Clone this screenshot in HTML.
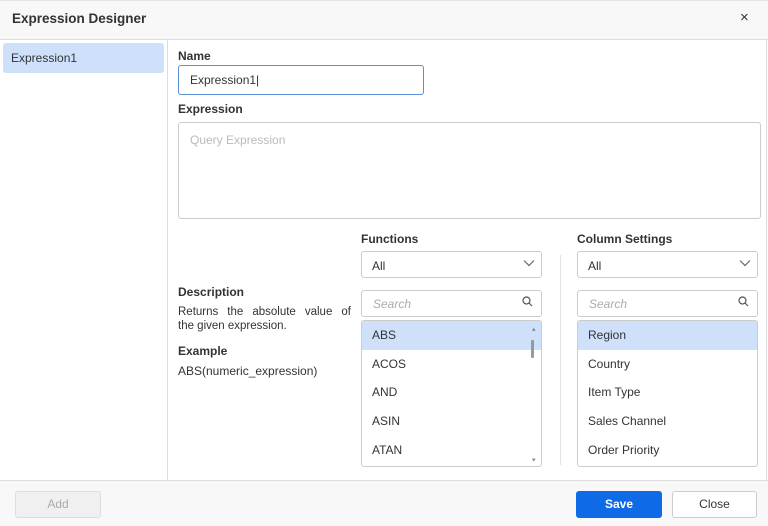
<!DOCTYPE html>
<html><head><style>
*{box-sizing:border-box;margin:0;padding:0}
body{width:768px;height:526px;overflow:hidden;background:#fff;font-family:"Liberation Sans",sans-serif;font-size:12px;color:#333;position:relative}
.a{position:absolute}
.lbl{font-weight:bold;font-size:12px;color:#333}
.box{border:1px solid #ccc;border-radius:3px;background:#fff}
.item{height:28.7px;line-height:28.7px;padding-left:10px;font-size:12px;color:#333}
.sel{background:#cfe0fb}
</style></head><body>
<div class="a" style="left:0;top:0;width:768px;height:40px;background:#f8f8f8;border-bottom:1px solid #ddd;border-top:1px solid #e5e5e5"></div>
<div class="a" style="left:12px;top:11px;font-size:13.5px;font-weight:bold;color:#333">Expression Designer</div>
<div class="a" style="left:740px;top:9px;font-size:15px;color:#333">×</div>
<div class="a" style="left:167px;top:40px;width:1px;height:440px;background:#ddd"></div>
<div class="a" style="left:766px;top:40px;width:1px;height:440px;background:#ddd"></div>
<div class="a" style="left:3px;top:43px;width:161px;height:30px;background:#cfe0fb;border-radius:3px;padding:8px 0 0 8px;color:#333">Expression1</div>
<div class="a lbl" style="left:178px;top:49px">Name</div>
<div class="a" style="left:178px;top:65px;width:246px;height:30px;border:1px solid #5b8fd6;border-radius:3px;padding:7px 11px;font-size:12px">Expression1|</div>
<div class="a lbl" style="left:178px;top:102px">Expression</div>
<div class="a box" style="left:178px;top:122px;width:583px;height:97px;padding:10px 11px;color:#bbb">Query Expression</div>
<div class="a lbl" style="left:361px;top:232px">Functions</div>
<div class="a lbl" style="left:577px;top:232px">Column Settings</div>
<div class="a lbl" style="left:178px;top:285px">Description</div>
<div class="a" style="left:178px;top:305px;width:173px;line-height:14px;font-size:11.5px"><div style="text-align:justify;text-align-last:justify">Returns the absolute value of</div><div>the given expression.</div></div>
<div class="a lbl" style="left:178px;top:344px">Example</div>
<div class="a" style="left:178px;top:364px">ABS(numeric_expression)</div>
<div class="a" style="left:560px;top:255px;width:1px;height:210px;background:#e2e2e2"></div>

<div class="a box" style="left:361px;top:251px;width:181px;height:27px;padding:7px 10px">All</div>
<svg class="a" style="left:523px;top:259px" width="12" height="8"><path d="M1 1.5L6 6.5L11 1.5" fill="none" stroke="#666" stroke-width="1.2"/></svg>
<div class="a box" style="left:361px;top:290px;width:181px;height:27px;padding:6px 11px;font-style:italic;color:#aaa">Search</div>
<svg class="a" style="left:522px;top:296px" width="11" height="11"><circle cx="4.5" cy="4.5" r="3.5" fill="none" stroke="#555" stroke-width="1.2"/><path d="M7 7L10 10" stroke="#555" stroke-width="1.2"/></svg>
<div class="a box" style="left:361px;top:320px;width:181px;height:147px;overflow:hidden">
<div class="item sel">ABS</div><div class="item">ACOS</div><div class="item">AND</div><div class="item">ASIN</div><div class="item">ATAN</div></div>
<div class="a" style="left:531px;top:340px;width:3px;height:18px;background:#999;border-radius:1px"></div>
<div class="a" style="left:532px;top:325px;font-size:7px;color:#888">▴</div>
<div class="a" style="left:532px;top:456px;font-size:7px;color:#888">▾</div>

<div class="a box" style="left:577px;top:251px;width:181px;height:27px;padding:7px 10px">All</div>
<svg class="a" style="left:739px;top:259px" width="12" height="8"><path d="M1 1.5L6 6.5L11 1.5" fill="none" stroke="#666" stroke-width="1.2"/></svg>
<div class="a box" style="left:577px;top:290px;width:181px;height:27px;padding:6px 11px;font-style:italic;color:#aaa">Search</div>
<svg class="a" style="left:738px;top:296px" width="11" height="11"><circle cx="4.5" cy="4.5" r="3.5" fill="none" stroke="#555" stroke-width="1.2"/><path d="M7 7L10 10" stroke="#555" stroke-width="1.2"/></svg>
<div class="a box" style="left:577px;top:320px;width:181px;height:147px;overflow:hidden">
<div class="item sel">Region</div><div class="item">Country</div><div class="item">Item Type</div><div class="item">Sales Channel</div><div class="item">Order Priority</div></div>

<div class="a" style="left:0;top:480px;width:768px;height:46px;background:#f8f8f8;border-top:1px solid #ddd"></div>
<div class="a" style="left:15px;top:491px;width:86px;height:27px;border:1px solid #ddd;border-radius:3px;background:#f0f0f0;color:#aaa;text-align:center;line-height:25px">Add</div>
<div class="a" style="left:576px;top:491px;width:86px;height:27px;border-radius:3px;background:#0f6ae8;color:#fff;text-align:center;line-height:27px;font-weight:bold">Save</div>
<div class="a" style="left:672px;top:491px;width:85px;height:27px;border:1px solid #ccc;border-radius:3px;background:#fff;color:#333;text-align:center;line-height:25px">Close</div>
</body></html>
